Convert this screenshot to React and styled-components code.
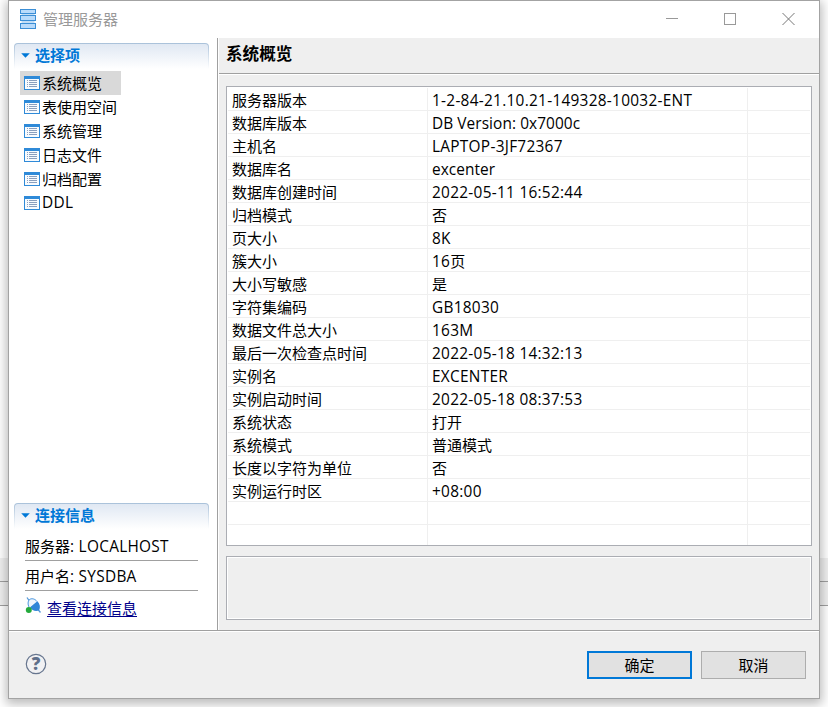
import styled, { createGlobalStyle } from 'styled-components';

const GlobalStyle = createGlobalStyle`
  * {
    box-sizing: border-box;
  }

  body {
    margin: 0;
    overflow: hidden;
    font-family: 'Noto Sans CJK SC', sans-serif;
    font-size: 15px;
    color: #000;
  }
`;

const Desktop = styled.div`
  height: 707px;
  padding: 0 8px 8px;
  background: linear-gradient(
    #fff 558px,
    #f0f0f0 558px 581px,
    #a0a0a0 581px 582px,
    #f0f0f0 582px 605px,
    #a0a0a0 605px 606px,
    #fff 606px
  );
`;

const Window = styled.div`
  display: flex;
  flex-direction: column;
  width: 812px;
  height: 699px;
  border: 1px solid #a3a3a3;
  background: #efefef;
  box-shadow: 0 3px 10px 2px rgba(0, 0, 0, 0.27);
`;

const TitleBar = styled.div`
  display: flex;
  align-items: center;
  flex: 0 0 37px;
  padding: 0 24px 2px 11px;
  background: #fff;
`;

const Title = styled.span`
  flex: 1;
  margin-left: 7px;
  line-height: 20px;
  color: #999;
`;

const WindowButtons = styled.div`
  display: flex;
  gap: 46px;
`;

const Content = styled.div`
  display: flex;
  flex: 0 0 592px;
`;

const Sidebar = styled.div`
  display: flex;
  flex-direction: column;
  justify-content: space-between;
  width: 209px;
  padding: 5px 8px 11px 5px;
  background: #fff;
  border-right: 1px solid #a0a0a0;
`;

const Section = styled.div`
  display: flex;
  flex-direction: column;
`;

const SectionHeader = styled.div`
  display: flex;
  align-items: center;
  gap: 5px;
  height: 26px;
  padding: 0 0 3px 6px;
  border: 1px solid transparent;
  border-bottom: 0;
  border-radius: 4px 4px 0 0;
  background:
    linear-gradient(#e0e8f3, #fff) padding-box,
    linear-gradient(#a9c1da, #fff) border-box;
  color: #0078d7;
  font-weight: 700;
  line-height: 22px;
`;

const Menu = styled.ul`
  display: flex;
  flex-direction: column;
  align-items: flex-start;
  list-style: none;
  margin: 2px 0 0 6px;
  padding: 0;
`;

const MenuItem = styled.li`
  display: flex;
  align-items: center;
  gap: 2px;
  width: 101px;
  height: 24px;
  padding-left: 4px;
  white-space: nowrap;
  line-height: 24px;
  background: ${(props) => (props.$active ? '#d9d9d9' : 'transparent')};
`;

const Latin = styled.span`
  font-family: 'Open Sans', 'Noto Sans CJK SC', sans-serif;
  font-size: 15.4px;
  letter-spacing: ${(props) => props.$spacing ?? 0.28}px;
`;

const Connection = styled.div`
  display: flex;
  flex-direction: column;
  margin: 3px 11px 0 11px;
`;

const ConnectionRow = styled.div`
  height: ${(props) => props.$height}px;
  padding-top: ${(props) => props.$height - 26}px;
  border-bottom: 1px solid #a0a0a0;
  line-height: 22px;
  white-space: pre;
`;

const LinkRow = styled.div`
  display: flex;
  gap: 6px;
  height: 28px;
  padding-top: 6px;
`;

const ConnectionLink = styled.a`
  color: #00008b;
  line-height: 22px;
  white-space: nowrap;
  text-decoration: underline;
  text-underline-offset: 2px;
  text-decoration-thickness: 1px;
`;

const Main = styled.div`
  display: flex;
  flex-direction: column;
  flex: 1;
  border-left: 1px solid #fff;
`;

const Heading = styled.h1`
  flex: 0 0 36px;
  margin: 0;
  padding-left: 7px;
  border-bottom: 1px solid #a0a0a0;
  box-shadow: 0 1px #fff;
  font-size: 16.6px;
  font-weight: 700;
  line-height: 30px;
`;

const Panel = styled.div`
  flex: 0 0 ${(props) => props.$height}px;
  width: 586px;
  margin: ${(props) => props.$top}px 0 0 7px;
  border: 1px solid #abadb3;
  padding: 1px;
  background: ${(props) => props.$fill || '#fff'};
  box-shadow: inset 0 0 0 1px #fff;
  overflow: hidden;
`;

const Row = styled.div`
  display: grid;
  grid-template-columns: 200px 320px 1fr;
  grid-template-rows: 23px;
`;

const Cell = styled.div`
  padding-left: 4px;
  border-right: ${(props) => (props.$last ? 0 : 1)}px solid #efefef;
  border-bottom: 1px solid #efefef;
  line-height: 24px;
  white-space: nowrap;
`;

const Footer = styled.div`
  display: flex;
  align-items: center;
  flex: 1;
  gap: 9px;
  padding: 0 13px 0 16px;
  border-top: 1px solid #a0a0a0;
  box-shadow: inset 0 1px #fff;
`;

const Help = styled.span`
  display: flex;
  margin-right: auto;
  padding-bottom: 2px;
`;

const Button = styled.button`
  width: 105px;
  height: 28px;
  padding: 0;
  border: ${(props) => (props.$primary ? '2px solid #0078d7' : '1px solid #adadad')};
  background: #e1e1e1;
  color: #000;
  font: inherit;
  line-height: 22px;
`;

const ServerIcon = () => (
  <svg width="16" height="20" viewBox="0 0 16 20">
    <path d="M1.5 5.5h13M1.5 12.5h13M1.5 13.5h13" stroke="#c3def6" />
    <g fill="#b9dbfb" stroke="#3c8fd6">
      <rect x="0.5" y="0.5" width="15" height="4" />
      <rect x="0.5" y="6.5" width="15" height="5" />
      <rect x="0.5" y="14.5" width="15" height="5" />
    </g>
  </svg>
);

const ListIcon = () => (
  <svg width="16" height="14" viewBox="0 0 16 14" shapeRendering="crispEdges">
    <rect width="16" height="14" fill="#2f8ad8" />
    <rect x="1" y="3" width="14" height="10" fill="#f8fbfe" />
    <path d="M3 4.5h1M3 6.5h1M3 8.5h1M3 10.5h1M5 4.5h8M5 6.5h8M5 8.5h8M5 10.5h8" stroke="#8b9fbd" />
  </svg>
);

const Twistie = () => (
  <svg width="9" height="5" viewBox="0 0 9 5">
    <path d="M0.2 0.3h8.6L4.5 4.8z" fill="#0078d7" />
  </svg>
);

const PlugIcon = () => (
  <svg width="16" height="17" viewBox="0 0 16 17">
    <path d="M2 0.5l2 3M13 12.5l2.5 3" stroke="#5598d8" strokeWidth="1.3" fill="none" />
    <path d="M4 10C2.6 7.5 2.8 4.2 4.3 2.7 6.3 1 10 1.6 12 4.5" fill="#eef6fd" stroke="#4b97df" />
    <path d="M5 10.3L12.3 4.3c2.7 2.3 3.3 6 1.8 9-3 1.8-7.3.4-9.1-3z" fill="#2f86d7" />
    <circle cx="3.8" cy="13" r="3" fill="#24aa3c" />
  </svg>
);

const HelpIcon = () => (
  <svg width="22" height="22" viewBox="0 0 22 22">
    <circle cx="11" cy="11" r="9.7" fill="#f1f1f3" stroke="#66758e" strokeWidth="1.2" />
    <text x="11" y="17" textAnchor="middle" fontFamily="Open Sans, sans-serif" fontSize="17" fontWeight="800" fill="#5f6f8a">?</text>
  </svg>
);

const menu = ['系统概览', '表使用空间', '系统管理', '日志文件', '归档配置', 'DDL'];

const properties = [
  ['服务器版本', '1-2-84-21.10.21-149328-10032-ENT'],
  ['数据库版本', 'DB Version: 0x7000c'],
  ['主机名', 'LAPTOP-3JF72367'],
  ['数据库名', 'excenter'],
  ['数据库创建时间', '2022-05-11 16:52:44'],
  ['归档模式', '否'],
  ['页大小', '8K'],
  ['簇大小', '16', '页'],
  ['大小写敏感', '是'],
  ['字符集编码', 'GB18030'],
  ['数据文件总大小', '163M'],
  ['最后一次检查点时间', '2022-05-18 14:32:13'],
  ['实例名', 'EXCENTER'],
  ['实例启动时间', '2022-05-18 08:37:53'],
  ['系统状态', '打开'],
  ['系统模式', '普通模式'],
  ['长度以字符为单位', '否'],
  ['实例运行时区', '+08:00'],
  ['', ''],
  ['', ''],
];

const isLatin = (text) => /^[\x20-\x7e]+$/.test(text);

const Label = ({ text }) => {
  if (!isLatin(text)) return text;
  return <Latin $spacing={/[a-z]{3}/.test(text) ? 0.08 : 0.28}>{text}</Latin>;
};

const App = () => {
  return (
    <Desktop>
      <GlobalStyle />
      <Window>
        <TitleBar>
          <ServerIcon />
          <Title>管理服务器</Title>
          <WindowButtons>
            <svg width="12" height="12"><path d="M0 5.5h12" stroke="#999" /></svg>
            <svg width="12" height="12"><rect x="0.5" y="0.5" width="11" height="11" fill="none" stroke="#999" /></svg>
            <svg width="13" height="12"><path d="M0.5 0l12 12M12.5 0l-12 12" stroke="#777" /></svg>
          </WindowButtons>
        </TitleBar>
        <Content>
          <Sidebar>
            <Section>
              <SectionHeader><Twistie />选择项</SectionHeader>
              <Menu>
                {menu.map((item, index) => (
                  <MenuItem key={item} $active={index === 0}>
                    <ListIcon />
                    <Label text={item} />
                  </MenuItem>
                ))}
              </Menu>
            </Section>
            <Section>
              <SectionHeader><Twistie />连接信息</SectionHeader>
              <Connection>
                <ConnectionRow $height={29}>服务器<Latin>: LOCALHOST</Latin></ConnectionRow>
                <ConnectionRow $height={30}>用户名<Latin>: SYSDBA</Latin></ConnectionRow>
                <LinkRow>
                  <PlugIcon />
                  <ConnectionLink>查看连接信息</ConnectionLink>
                </LinkRow>
              </Connection>
            </Section>
          </Sidebar>
          <Main>
            <Heading>系统概览</Heading>
            <Panel $height={460} $top={12}>
              {properties.map(([name, value, unit], index) => (
                <Row key={index}>
                  <Cell>{name}</Cell>
                  <Cell><Label text={value} />{unit}</Cell>
                  <Cell $last />
                </Row>
              ))}
            </Panel>
            <Panel $height={64} $top={10} $fill="#efefef" />
          </Main>
        </Content>
        <Footer>
          <Help><HelpIcon /></Help>
          <Button $primary>确定</Button>
          <Button>取消</Button>
        </Footer>
      </Window>
    </Desktop>
  );
};

export default App;
